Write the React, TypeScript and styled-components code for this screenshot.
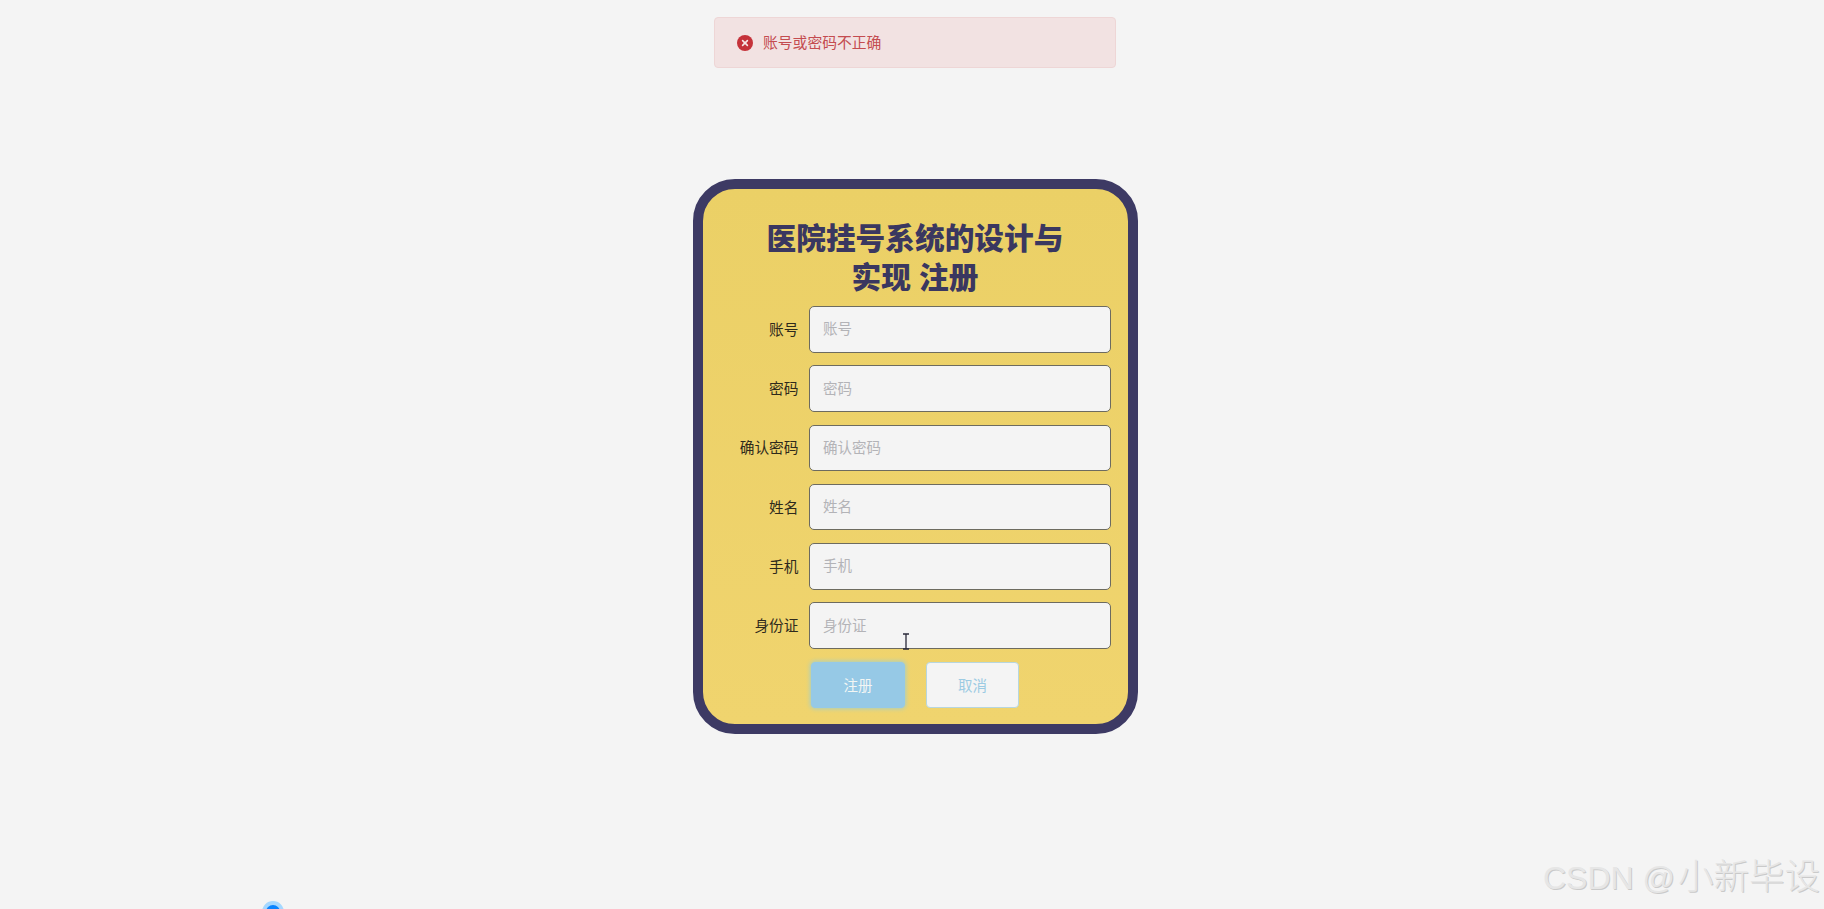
import React from "react";
import styled, {createGlobalStyle} from "styled-components";

const GlobalStyle = createGlobalStyle`
  html, body {
    margin: 0;
    padding: 0;
    height: 100%;
    overflow: hidden;
    background: #f4f4f4;
    font-family: "Liberation Sans", "Noto Sans CJK SC", sans-serif;
  }
`

const Page = styled.div`
  position: relative;
  box-sizing: border-box;
  height: 909px;
  padding: 179px 0 0 7px;
  display: flex;
  justify-content: center;
  align-items: flex-start;
  overflow: hidden;
`

const Message = styled.div`
  position: absolute;
  top: 17px;
  left: 714px;
  box-sizing: border-box;
  width: 402px;
  height: 51px;
  padding-left: 22px;
  display: flex;
  align-items: center;
  gap: 10px;
  background: #f2e2e2;
  border: 1px solid #eed6d6;
  border-radius: 4px;
`

const MessageText = styled.span`
  font-size: 14.8px;
  margin-top: -2px;
  color: #c44c50;
`

const Card = styled.form`
  box-sizing: border-box;
  width: 445px;
  height: 555px;
  padding: 30px 17px 0 20px;
  border: 10px solid #3d3a64;
  border-radius: 42px;
  background: linear-gradient(180deg, #ebd066 0%, #f0d46e 100%);
`

const Title = styled.h1`
  margin: 0 0 9px 32px;
  width: 320px;
  font-size: 29.7px;
  line-height: 39px;
  font-weight: 900;
  text-align: center;
  color: #3a3760;
`

const Rows = styled.div`
  display: flex;
  flex-direction: column;
  gap: 12.8px;
`

const Row = styled.div`
  display: flex;
  align-items: center;
  justify-content: flex-end;
  gap: 10.5px;
`

const Label = styled.label`
  font-size: 14.7px;
  margin-top: -2px;
  color: #2e2a1c;
  white-space: nowrap;
`

const Field = styled.input`
  box-sizing: border-box;
  width: 302px;
  height: 46.5px;
  padding: 0 13px;
  border: 1.5px solid #6d6b5f;
  border-radius: 5px;
  background: #f4f4f4;
  font: inherit;
  font-size: 14.5px;
  outline: none;

  &::placeholder {
    color: #b3b3b7;
  }
`

const Actions = styled.div`
  display: flex;
  gap: 21px;
  margin: 13px 0 0 88px;
`

const Button = styled.button<{ $primary?: boolean }>`
  box-sizing: border-box;
  width: ${p => (p.$primary ? "94px" : "93px")};
  height: 46px;
  padding: 0;
  border-radius: 4px;
  font: inherit;
  font-size: 14.5px;
  border: 1px solid ${p => (p.$primary ? "#96c9e6" : "#b7d6de")};
  background: ${p => (p.$primary ? "#96c9e6" : "#f4f4f4")};
  color: ${p => (p.$primary ? "#f2f6f4" : "#9ccbe3")};
  box-shadow: ${p => (p.$primary ? "0 0 4px 1px #a9cfc4" : "none")};
`

const Watermark = styled.div`
  position: absolute;
  right: 4px;
  bottom: 10px;
  display: flex;
  align-items: baseline;
  gap: 9px;
  color: #e6e6e6;
  font-weight: 300;
  text-shadow: 1px 1px 0 #cacaca;
  white-space: nowrap;
`

const WatermarkLatin = styled.span`
  font-size: 32px;
  font-weight: 400;
`

const WatermarkCjk = styled.span`
  font-size: 35.5px;
  margin-left: -6px;
`

const Dot = styled.div`
  position: absolute;
  left: 262px;
  top: 901px;
  box-sizing: border-box;
  width: 22px;
  height: 22px;
  border-radius: 50%;
  background: #0a84ff;
  border: 4px solid #a6d8ff;
`

const TextCursor = styled.svg`
  position: absolute;
  left: 902px;
  top: 633px;
`

const fields = ["账号", "密码", "确认密码", "姓名", "手机", "身份证"];

const App: React.FC = () => {
    return (
        <Page>
            <GlobalStyle/>
            <Message>
                <svg width="16" height="16" viewBox="0 0 16 16">
                    <circle cx="8" cy="8" r="8" fill="#c5323a"/>
                    <path d="M5.6 5.6l4.8 4.8M10.4 5.6l-4.8 4.8" stroke="#f6e6e6" strokeWidth="1.6" strokeLinecap="round"/>
                </svg>
                <MessageText>账号或密码不正确</MessageText>
            </Message>
            <Card onSubmit={e => e.preventDefault()}>
                <Title>医院挂号系统的设计与实现 注册</Title>
                <Rows>
                    {fields.map(name => (
                        <Row key={name}>
                            <Label>{name}</Label>
                            <Field placeholder={name}/>
                        </Row>
                    ))}
                </Rows>
                <Actions>
                    <Button $primary type="button">注册</Button>
                    <Button type="button">取消</Button>
                </Actions>
            </Card>
            <TextCursor width="8" height="17" viewBox="0 0 8 17">
                <path d="M1 1h6M1 16h6M4 1v15" stroke="#2a2a3a" strokeWidth="1.3" fill="none"/>
            </TextCursor>
            <Dot/>
            <Watermark>
                <WatermarkLatin>CSDN @</WatermarkLatin>
                <WatermarkCjk>小新毕设</WatermarkCjk>
            </Watermark>
        </Page>
    );
};

export default App;
